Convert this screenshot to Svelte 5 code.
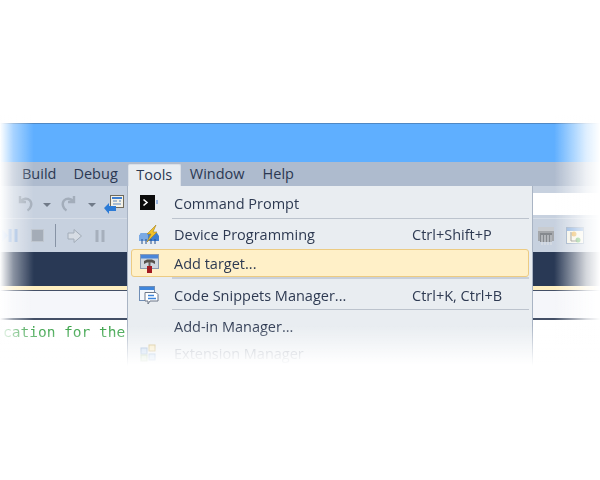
<script>
	const menus = ['Build', 'Debug', 'Tools', 'Window', 'Help'];
	const items = [
		{ id: 'cmd', label: 'Command Prompt', h: 33 },
		{ id: 'dev', label: 'Device Programming', keys: 'Ctrl+Shift+P', h: 30 },
		{ id: 'target', label: 'Add target...', h: 28, active: true },
		{ id: 'snip', label: 'Code Snippets Manager...', keys: 'Ctrl+K, Ctrl+B', h: 33 },
		{ id: 'addin', label: 'Add-in Manager...', h: 33 },
		{ id: 'ext', label: 'Extension Manager', h: 20 }
	];
</script>

<div class="page">
	<div class="window">
		<div class="title"></div>
		<nav class="menubar">
			{#each menus as m}
				<span class="menu" class:open={m === 'Tools'}>{m}</span>
			{/each}
		</nav>
		<div class="toolbars">
			<div class="row one">
				<svg class="undo" width="16" height="18" viewBox="0 0 16 18">
					<path d="M2 1v6h6M2.500 6.500C5 3 9.500 3 12 5.500c2.500 3 1 8-2.500 10" fill="none" stroke="#a3adba" stroke-width="2.400" />
				</svg>
				<span class="caret"></span>
				<svg class="redo" width="16" height="18" viewBox="0 0 16 18">
					<path d="M14 1v6H8M13.500 6.500C11 3 6.500 3 4 5.500c-2.500 3-1 8 2.500 10" fill="none" stroke="#a3adba" stroke-width="2.400" />
				</svg>
				<span class="caret"></span>
				<svg class="publish" width="20" height="19" viewBox="0 0 20 19">
					<rect x="6.500" y="0.500" width="13" height="12" fill="#f4f1e6" stroke="#6f6a5c" />
					<rect x="8" y="2" width="10" height="2" fill="#3f7fd0" />
					<path d="M9 6h4M15 6h2M9 9h8" stroke="#5a86bd" />
					<path d="M0 13l5-5v3h7v5H5v3z" fill="#2c7bd6" />
				</svg>
				<span class="input"></span>
			</div>
			<div class="row two">
				<svg class="run" width="18" height="15" viewBox="0 0 18 15">
					<path d="M0 1l6 6.500L0 14z" fill="#a9c4e8" />
					<path d="M8 1v13M14 1v13" stroke="#92b1dc" stroke-width="3" />
				</svg>
				<span class="stop"></span>
				<span class="divider"></span>
				<svg class="step" width="16" height="16" viewBox="0 0 16 16">
					<path d="M1 5h6V1.500L14.500 8 7 14.500V11H1z" fill="#d6dce4" stroke="#a2acb8" />
				</svg>
				<svg class="pause" width="10" height="14" viewBox="0 0 10 14">
					<path d="M2 1v12M8 1v12" stroke="#a6afbc" stroke-width="3" />
				</svg>
				<span class="push"></span>
				<svg class="chip" width="18" height="20" viewBox="0 0 18 20">
					<path d="M1 1h16v14H1z" fill="#a4a7ab" />
					<path d="M1 1h16v4H1z" fill="#c9ccd0" />
					<path d="M3 7h12v9H3z" fill="#85898e" />
					<path d="M5 9v10M8 9v10M11 9v10M14 9v10" stroke="#dfe2e6" />
				</svg>
				<svg class="chart" width="18" height="18" viewBox="0 0 18 18">
					<rect x="0.500" y="0.500" width="17" height="16" fill="#f6f3e4" stroke="#8fa3bd" />
					<rect x="1" y="1" width="16" height="3" fill="#7fa8dc" />
					<circle cx="8" cy="7" r="2.500" fill="#e9b24c" />
					<circle cx="12" cy="13" r="2.500" fill="#62b45c" />
					<path d="M5 5v9h6" stroke="#6c6c60" fill="none" />
				</svg>
			</div>
		</div>
		<div class="tabs"></div>
		<div class="accent"></div>
		<div class="strip"></div>
		<div class="code">cation for the</div>
	</div>

	<div class="dropdown">
		{#each items as item}
			<div class="item {item.id}" class:active={item.active} style="height: {item.h}px">
				<span class="icon">
					{#if item.id === 'cmd'}
						<svg width="18" height="16" viewBox="0 0 18 16">
							<rect width="15" height="15" fill="#0c0c0c" />
							<path d="M3.500 4.500L7 7.500l-3.500 3" fill="none" stroke="#fff" stroke-width="1.600" />
							<path d="M17 5v4" stroke="#4a7fd0" />
						</svg>
					{:else if item.id === 'dev'}
						<svg width="20" height="19" viewBox="0 0 20 19">
							<path d="M0 11l2-3h16l2 3v5H0z" fill="#3f7fd2" />
							<path d="M0 11l2-3h7v8H0z" fill="#7aa9e4" />
							<path d="M3 14v5M7 14v5M12 14v5M16 14v5" stroke="#234f8f" />
							<path d="M17 0L8 9h4l-4 8 10-10h-4l3-7z" fill="#f2c22a" stroke="#a8821a" stroke-width="0.600" />
						</svg>
					{:else if item.id === 'target'}
						<svg width="19" height="19" viewBox="0 0 19 19">
							<rect x="0.500" y="0.500" width="18" height="14" fill="#cfd6de" stroke="#8b9ab0" />
							<rect x="1" y="1" width="17" height="3.500" fill="#4b86d8" />
							<path d="M4 10V7l3-1.500h5l3 1.500v3l-3-1.500H7z" fill="#55504c" />
							<rect x="8.500" y="8" width="2" height="5" fill="#6b6560" />
							<rect x="7" y="12" width="5" height="7" fill="#a21a22" />
						</svg>
					{:else if item.id === 'snip'}
						<svg width="20" height="19" viewBox="0 0 20 19">
							<rect x="0.500" y="0.500" width="15" height="14" fill="#f4f7fb" stroke="#6f8db5" />
							<rect x="1" y="1" width="14" height="3" fill="#3f86dc" />
							<path d="M6 6.500h11l2 2v6.500h-8l-2 3v-3H6z" fill="#fff" stroke="#6c7788" />
							<path d="M9 9.500h6M9 12.500h8" stroke="#3f86dc" stroke-width="1.400" />
						</svg>
					{:else if item.id === 'ext'}
						<svg width="18" height="18" viewBox="0 0 18 18">
							<rect x="1" y="4" width="6" height="6" fill="#bcd3ee" stroke="#7fa0c8" />
							<rect x="9" y="1" width="6" height="6" fill="#f4e6b8" stroke="#c6ae6c" />
							<rect x="1" y="11" width="6" height="6" fill="#c8dcc0" stroke="#8fb088" />
							<rect x="9" y="10" width="6" height="6" fill="#bcd3ee" stroke="#7fa0c8" />
						</svg>
					{/if}
				</span>
				<span class="label">{item.label}</span>
				{#if item.keys}<span class="keys">{item.keys}</span>{/if}
			</div>
		{/each}
	</div>

	<div class="fade left"></div>
	<div class="fade right"></div>
	<div class="fade bottom"></div>
</div>

<style>
	:global(body) {
		background: #fff;
	}

	.page {
		position: relative;
		width: 600px;
		height: 480px;
		overflow: hidden;
		background: #fff;
		font-family: "Open Sans", "Noto Sans", sans-serif;
		color: #2e3a52;
	}

	.window {
		padding-top: 123px;
		filter: blur(0.5px);
	}

	.title {
		height: 38px;
		background: #5fafff;
		border-top: 1px solid #4f88c4;
	}

	.menubar {
		display: flex;
		height: 24px;
		padding-left: 14px;
		background: #aebbce;
		font-size: 14.500px;
		line-height: 24px;
		color: #2b3852;
	}

	.menu {
		padding: 0 8px;
	}
	.menu:nth-child(2) {
		padding-left: 9px;
	}
	.menu.open {
		margin: 2px 1px 0 2px;
		padding: 0 7.500px;
		line-height: 20px;
		background: #e9edf1;
		border: 1px solid #d9dfe7;
		border-bottom: 0;
		border-radius: 2px 2px 0 0;
	}
	.menu:last-child {
		margin-left: 2px;
	}

	.toolbars {
		background: #c7d1df;
	}
	.row {
		display: flex;
		align-items: center;
	}
	.row.one {
		height: 33px;
		box-sizing: border-box;
		padding: 4px 0 0 18px;
		border-bottom: 1px solid #d6dde7;
	}
	.row.two {
		height: 33px;
		padding-left: 2px;
	}
	.caret {
		width: 0;
		height: 0;
		margin: 2px 9px 0 9px;
		border: 4px solid transparent;
		border-top: 4px solid #707a88;
		border-bottom: 0;
	}
	.redo + .caret {
		margin-left: 12px;
	}
	.publish {
		margin-left: -1px;
	}
	.input {
		width: 67px;
		height: 22px;
		margin-left: auto;
		background: #fff;
	}
	.stop {
		width: 11px;
		height: 11px;
		margin-left: 11px;
		background: #a4acb7;
		border: 1px solid #bfc6cf;
	}
	.divider {
		width: 1px;
		height: 23px;
		margin: 0 11px 0 11px;
		background: #8793a5;
	}
	.pause {
		margin-left: 12px;
	}
	.push {
		margin-left: auto;
	}
	.chart {
		margin: 0 16px 0 11px;
	}

	.tabs {
		height: 34px;
		background: #293955;
	}
	.accent {
		height: 4px;
		background: #ffefc0;
		border-bottom: 1px solid #434f66;
	}
	.strip {
		height: 27px;
		background: #f5f6fa;
		border-bottom: 2px solid #434f66;
	}
	.code {
		padding: 2px 0 0 3px;
		font: 14.500px/20px "DejaVu Sans Mono", "Liberation Mono", monospace;
		color: #2f9e3f;
	}

	.dropdown {
		position: absolute;
		left: 127px;
		top: 186px;
		width: 406px;
		height: 186px;
		padding: 0 3px;
		box-sizing: border-box;
		overflow: hidden;
		background: #e9edf1;
		border-left: 1px solid #a9b4c4;
		border-right: 1px solid #a9b4c4;
		filter: blur(0.5px);
		font-size: 14.500px;
	}

	.item {
		display: flex;
		align-items: center;
		box-sizing: border-box;
		position: relative;
	}
	.item.cmd {
		padding-top: 2px;
	}
	.item.cmd,
	.item.snip {
		margin-left: 41px;
		border-bottom: 1px solid #bcc3cd;
	}
	.item.cmd .icon,
	.item.snip .icon {
		margin-left: -41px;
	}
	.item.snip {
		padding-top: 4px;
	}
	.item.snip::before {
		content: "";
		position: absolute;
		left: 0;
		right: 0;
		top: 0;
		height: 2px;
		background: #c9d0da;
	}
	.item.active {
		background: #fff0c8;
		border: 1px solid #eccb83;
		border-radius: 3px;
	}
	.item.active .icon {
		margin-left: -1px;
	}
	.item.ext {
		color: #a5adb9;
	}

	.icon {
		display: flex;
		justify-content: center;
		width: 36px;
		padding-right: 4px;
		flex: none;
		margin-right: 3px;
	}
	.keys {
		position: absolute;
		left: 281px;
	}
	.item.snip .keys {
		left: 240px;
	}

	.fade {
		position: absolute;
		pointer-events: none;
	}
	.fade.left {
		left: 0;
		top: 115px;
		width: 34px;
		height: 260px;
		background: linear-gradient(to right, #fff 0%, rgba(255, 255, 255, 0.45) 40%, rgba(255, 255, 255, 0) 100%);
	}
	.fade.right {
		right: 0;
		top: 115px;
		width: 46px;
		height: 260px;
		background: linear-gradient(to left, #fff 0%, rgba(255, 255, 255, 0.8) 30%, rgba(255, 255, 255, 0) 100%);
	}
	.fade.bottom {
		left: 0;
		top: 325px;
		width: 600px;
		height: 55px;
		background: linear-gradient(to bottom, rgba(255, 255, 255, 0) 0%, rgba(255, 255, 255, 0.85) 62%, #fff 75%);
	}
</style>
